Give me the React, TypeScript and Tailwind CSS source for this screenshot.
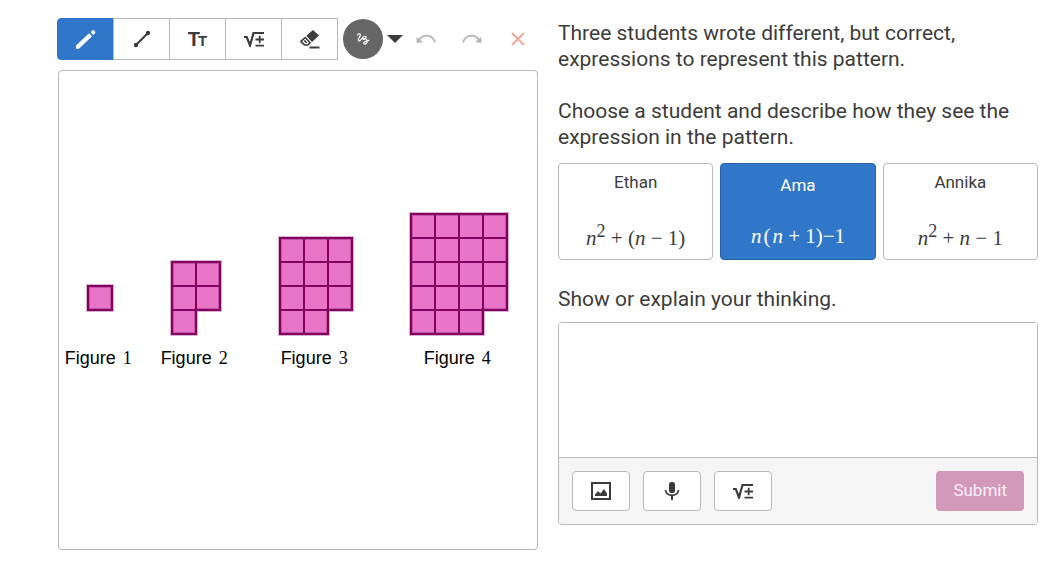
import { useState } from 'react';
import type { ReactNode } from 'react';

const INK = '#3c3c3c';

function PencilIcon() {
  return (
    <svg width="22" height="22" viewBox="0 0 22 22" fill="currentColor" aria-hidden="true">
      <path d="M1 20.800V17.400L14.100 5.200L17 8.200L4 20.800Z" />
      <path d="M15.600 3.900L17.300 2.400Q18.200 1.700 19.100 2.500L20 3.400Q20.800 4.300 20 5.300L18.400 6.900Z" />
    </svg>
  );
}

function LineIcon() {
  return (
    <svg width="18" height="18" viewBox="0 0 18 18" fill={INK} aria-hidden="true">
      <path d="M3 15L15 3" stroke={INK} strokeWidth="2" />
      <circle cx="3" cy="15" r="2.200" />
      <circle cx="15" cy="3" r="2.200" />
    </svg>
  );
}

function TextIcon() {
  return (
    <span className="flex items-baseline pt-0.5 font-['Liberation_Sans'] leading-none font-bold" aria-hidden="true">
      <span className="text-xl leading-5">T</span>
      <span className="-ml-0.5 text-[15px] leading-5">T</span>
    </span>
  );
}

function MathIcon() {
  return (
    <svg width="20" height="16" viewBox="0 0 20 16" fill="none" stroke={INK} strokeWidth="1.800" aria-hidden="true">
      <path d="M0 6H2.800L6 14.500L9.500 2H20" strokeWidth="2.200" />
      <path d="M11.500 8.500H20M15.700 4.800V12.200M11.500 14.600H20" />
    </svg>
  );
}

function EraserIcon() {
  return (
    <svg width="20" height="20" viewBox="0 0 20 20" fill={INK} aria-hidden="true">
      <path d="M13 1L19 6.600L12 13L6.300 6.800Z" />
      <path d="M5.300 7.600L11.200 13.700L8.200 16.800H4.200L0.300 13.200V11.800Z" />
      <path d="M5.100 9.600L9 13.700L7.500 15.300H5L2.100 12.400Z" fill="#fff" />
      <path d="M4.800 10.800L7.300 13.600L6.300 14.600L3.700 11.900Z" />
      <path d="M9.500 17.500H19.500V19.500H9.500Z" />
    </svg>
  );
}

function ScribbleIcon() {
  return (
    <svg width="14" height="14" viewBox="0 0 14 14" fill="none" stroke="#fff" strokeWidth="1.200" strokeLinecap="round" aria-hidden="true">
      <path d="M1.500 3C2.500 1.200 4.800 1.300 4.300 3.300C3.900 5.200 1.800 6.600 2.300 8.200C2.900 9.700 4.700 8.500 6 6.300C7.500 3.600 10.600 3.800 10 5.700C9.300 7.600 6.800 8 7 6.900C7.300 6 10.400 6.200 11 8.200C11.800 10.600 9.500 12.700 8 11.800C6.700 10.900 9.200 9 12.800 8.300" />
    </svg>
  );
}

function UndoIcon({ flipped = false }: { flipped?: boolean }) {
  return (
    <svg width="20" height="10" viewBox="0 0 20 10" fill="none" className={flipped ? '-scale-x-100' : ''} aria-hidden="true">
      <path d="M2.500 7C6 0 16 -1 19 8.500" stroke="#b5b5b5" strokeWidth="1.800" />
      <path d="M0.500 3L0.700 9L7 8Z" fill="#b5b5b5" />
    </svg>
  );
}

function ImageIcon() {
  return (
    <svg width="20" height="18" viewBox="0 0 20 18" fill={INK} aria-hidden="true">
      <path d="M1 1H19V17H1Z" fill="none" stroke={INK} strokeWidth="2" />
      <path d="M4 14V12.500L7 9L9.500 11.500L13 7L16 11.500V14Z" />
    </svg>
  );
}

function MicIcon() {
  return (
    <svg width="16" height="18" viewBox="0 0 16 18" fill={INK} aria-hidden="true">
      <rect x="5" y="0" width="6" height="11" rx="2.500" />
      <path d="M1.500 8C2 15 14 15 14.500 8" fill="none" stroke={INK} strokeWidth="1.800" />
      <path d="M7 13H9V18H7Z" />
    </svg>
  );
}

const TOOLS: { label: string; icon: ReactNode }[] = [
  { label: 'Pencil', icon: <PencilIcon /> },
  { label: 'Line', icon: <LineIcon /> },
  { label: 'Text', icon: <TextIcon /> },
  { label: 'Math', icon: <MathIcon /> },
  { label: 'Eraser', icon: <EraserIcon /> },
];

function Toolbar() {
  const [active, setActive] = useState('Pencil');

  return (
    <div className="flex items-center">
      <div className="flex">
        {TOOLS.map(({ label, icon }) => (
          <button
            key={label}
            type="button"
            aria-label={label}
            aria-pressed={active === label}
            onClick={() => setActive(label)}
            className={`-ml-px grid h-[42px] w-[57px] place-items-center border first:rounded-l-sm ${
              active === label
                ? 'border-[#3077c9] bg-[#3077c9] text-white'
                : 'border-[#b8b8b8] bg-white text-[#3c3c3c]'
            }`}
          >
            {icon}
          </button>
        ))}
      </div>
      <button type="button" aria-label="Pen style" className="ml-[5px] flex items-center gap-1">
        <span className="grid h-10 w-10 place-items-center rounded-full bg-[#666]">
          <ScribbleIcon />
        </span>
        <svg width="16" height="8" viewBox="0 0 16 8" fill={INK} aria-hidden="true">
          <path d="M0 0H16L8 8Z" />
        </svg>
      </button>
      <div className="ml-[13px] flex flex-1 items-center justify-between pr-[13px]">
        <button type="button" aria-label="Undo">
          <UndoIcon />
        </button>
        <button type="button" aria-label="Redo">
          <UndoIcon flipped />
        </button>
        <button type="button" aria-label="Clear" className="ml-1">
          <svg width="14" height="14" viewBox="0 0 14 14" stroke="#f2a898" strokeWidth="2" aria-hidden="true">
            <path d="M1 1L13 13M13 1L1 13" />
          </svg>
        </button>
      </div>
    </div>
  );
}

const CELL = 24;

/** Tiles of figure n: n columns by n + 1 rows, less the bottom right one. */
function Tiles({ n }: { n: number }) {
  const cells: { x: number; y: number }[] = [];
  for (let row = 0; row <= n; row++) {
    for (let col = 0; col < n; col++) {
      if (row === n && col === n - 1) continue;
      cells.push({ x: 2 + col * CELL, y: 2 + row * CELL });
    }
  }
  const width = n * CELL + 4;
  const height = (n + 1) * CELL + 4;
  const right = 2 + n * CELL;
  const bottom = 2 + n * CELL;
  const outline = `M2 2H${right}V${bottom}H${right - CELL}V${n > 1 ? bottom + CELL : bottom}H2Z`;

  return (
    <svg width={width} height={height} viewBox={`0 0 ${width} ${height}`} aria-hidden="true">
      {cells.map(({ x, y }) => (
        <rect key={`${x}-${y}`} x={x} y={y} width={CELL} height={CELL} fill="#e874c8" stroke="#820060" strokeWidth="2" />
      ))}
      <path d={outline} fill="none" stroke="#820060" strokeOpacity="0.3" strokeWidth="4" />
      <path d={outline} fill="none" stroke="#820060" strokeWidth="2" />
    </svg>
  );
}

function Sketch() {
  return (
    <div className="mt-2.5 aspect-square rounded-sm border border-[#b8b8b8] pt-[141px]">
      <div className="grid grid-cols-[41fr_54fr_65fr_77fr] items-end">
        {[1, 2, 3, 4].map((n) => (
          <figure key={n} className="flex flex-col items-center gap-2.5">
            <Tiles n={n} />
            <figcaption className="pr-1 font-['Liberation_Sans'] text-lg leading-6 whitespace-nowrap text-black">
              Figure <span className="ml-0.5 font-['Liberation_Serif'] text-lg leading-6">{n}</span>
            </figcaption>
          </figure>
        ))}
      </div>
    </div>
  );
}

const N = () => <i>n</i>;
const Squared = () => <sup className="static align-super text-lg leading-5">2</sup>;

const STUDENTS: { name: string; expression: ReactNode }[] = [
  { name: 'Ethan', expression: <><N /><Squared /> + (<N /> − 1)</> },
  { name: 'Ama', expression: <><N /><span className="px-0.5">(</span><N /> + 1)−1</> },
  { name: 'Annika', expression: <><N /><Squared /> + <N /> − 1</> },
];

function StudentChoices() {
  const [chosen, setChosen] = useState('Ama');

  return (
    <div className="mt-[13px] grid grid-cols-3 gap-[7px]">
      {STUDENTS.map(({ name, expression }) => (
        <button
          key={name}
          type="button"
          aria-pressed={chosen === name}
          onClick={() => setChosen(name)}
          className={`flex h-[97px] flex-col items-center justify-center gap-[27px] rounded-sm border pb-[3px] ${
            chosen === name
              ? 'border-[#2564ab] bg-[#3077c9] text-white'
              : 'border-[#b8b8b8] bg-white text-[#3c3c3c]'
          }`}
        >
          <span className="text-[17px] leading-6">{name}</span>
          <span className="font-['Liberation_Serif'] text-[21px] leading-6 whitespace-nowrap">{expression}</span>
        </button>
      ))}
    </div>
  );
}

const ATTACHMENTS: { label: string; icon: ReactNode }[] = [
  { label: 'Add image', icon: <ImageIcon /> },
  { label: 'Record audio', icon: <MicIcon /> },
  { label: 'Insert math', icon: <MathIcon /> },
];

function Response() {
  return (
    <div className="mt-2.5 overflow-hidden rounded-sm border border-[#b8b8b8]">
      <textarea
        id="thinking"
        className="block h-[134px] w-full resize-none bg-white p-3 text-xl outline-none"
      />
      <div className="flex items-center gap-[13px] border-t border-[#b8b8b8] bg-[#f5f5f5] p-[13px]">
        {ATTACHMENTS.map(({ label, icon }) => (
          <button
            key={label}
            type="button"
            aria-label={label}
            className="grid h-10 w-[58px] place-items-center rounded-sm border border-[#b8b8b8] bg-white"
          >
            {icon}
          </button>
        ))}
        <button type="submit" className="ml-auto h-10 rounded-sm bg-[#d299bb] px-[17px] text-[17px] text-[#fbeff6]">
          Submit
        </button>
      </div>
    </div>
  );
}

export default function App() {
  return (
    <main className="grid grid-cols-2 gap-5 bg-white pt-[18px] pr-6 pb-9 pl-[58px] font-['Roboto',sans-serif] text-[#3c3c3c]">
      <section>
        <Toolbar />
        <Sketch />
      </section>
      <section className="pt-0.5">
        <div className="space-y-[26px] text-[21px] leading-[26px]">
          <p>Three students wrote different, but correct, expressions to represent this pattern.</p>
          <p>Choose a student and describe how they see the expression in the pattern.</p>
        </div>
        <StudentChoices />
        <form onSubmit={(e) => e.preventDefault()}>
          <label htmlFor="thinking" className="mt-[26px] block text-[21px] leading-[26px]">
            Show or explain your thinking.
          </label>
          <Response />
        </form>
      </section>
    </main>
  );
}
